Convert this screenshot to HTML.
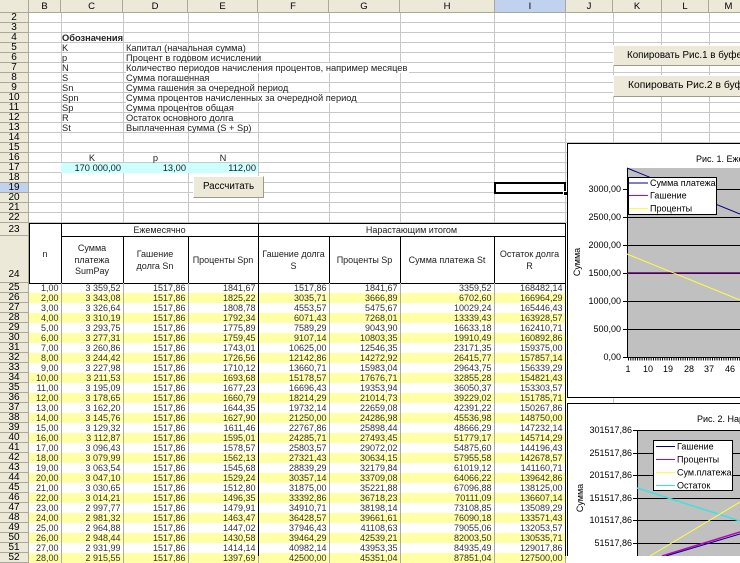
<!DOCTYPE html>
<html><head><meta charset="utf-8">
<style>
*{margin:0;padding:0;box-sizing:border-box}
body{width:740px;height:556px;overflow:hidden;background:#fff;position:relative;font-family:"Liberation Sans","DejaVu Sans",sans-serif;font-size:9.3px;color:#222}
.a{position:absolute;white-space:nowrap}
.ch{position:absolute;top:0;height:13px;background:#ece9d8;border-right:1px solid #aca899;border-bottom:1px solid #aca899;text-align:center;font-size:9.5px;line-height:13px;color:#000}
.rh{position:absolute;left:0;width:29px;background:#ece9d8;border-bottom:1px solid #aca899;border-right:1px solid #aca899;text-align:center;font-size:10px;color:#000}
.vl{position:absolute;width:1px;background:#c8c8c8}
table{position:absolute;left:29px;top:283px;border-collapse:collapse;table-layout:fixed}
td{height:10px;padding:0 2px 0 0;text-align:right;font-size:9px;line-height:10px;color:#333;border-right:1px solid #aaa;overflow:hidden;white-space:nowrap}
tr:nth-child(even) td{background:#ffffa6}
.btn{position:absolute;background:#ece9d8;border:1px solid;border-color:#fff #9d9a8b #9d9a8b #fff;font-size:9.8px;line-height:19px;white-space:nowrap;overflow:hidden;color:#000}
.hd{position:absolute;text-align:center;white-space:normal;line-height:11.5px;font-size:9px}
</style></head><body>

<div class="ch" style="left:0;width:29px"></div>
<div class="ch" style="left:29px;width:32px">B</div>
<div class="ch" style="left:61px;width:62px">C</div>
<div class="ch" style="left:123px;width:65px">D</div>
<div class="ch" style="left:188px;width:70px">E</div>
<div class="ch" style="left:258px;width:71px">F</div>
<div class="ch" style="left:329px;width:71px">G</div>
<div class="ch" style="left:400px;width:95px">H</div>
<div class="ch" style="left:495px;width:71px;background:#c1d2ee">I</div>
<div class="ch" style="left:566px;width:47px">J</div>
<div class="ch" style="left:613px;width:49px">K</div>
<div class="ch" style="left:662px;width:47px">L</div>
<div class="ch" style="left:709px;width:40px">M</div>

<div style="position:absolute;left:29px;top:13px;width:711px;height:210px;background:repeating-linear-gradient(to bottom,transparent 0,transparent 9px,#c8c8c8 9px,#c8c8c8 10px)"></div>
<div class="vl" style="left:61px;top:13px;height:210px"></div>
<div class="vl" style="left:123px;top:13px;height:210px"></div>
<div class="vl" style="left:188px;top:13px;height:210px"></div>
<div class="vl" style="left:258px;top:13px;height:210px"></div>
<div class="vl" style="left:329px;top:13px;height:210px"></div>
<div class="vl" style="left:400px;top:13px;height:210px"></div>
<div class="vl" style="left:494px;top:13px;height:210px"></div>
<div class="vl" style="left:565px;top:13px;height:210px"></div>
<div class="vl" style="left:613px;top:13px;height:210px"></div>
<div class="vl" style="left:661px;top:13px;height:210px"></div>
<div class="vl" style="left:709px;top:13px;height:210px"></div>
<div class="vl" style="left:565px;top:223px;height:333px"></div>
<div class="vl" style="left:613px;top:223px;height:333px"></div>

<div class="a" style="left:62px;top:33px;font-weight:bold">Обозначения</div>
<div class="a" style="left:62px;top:43px">K</div><div class="a" style="left:126px;top:43px">Капитал (начальная сумма)</div>
<div class="a" style="left:62px;top:53px">p</div><div class="a" style="left:126px;top:53px">Процент в годовом исчислении</div>
<div class="a" style="left:62px;top:63px">N</div><div class="a" style="left:126px;top:63px;background:#fff;padding-right:2px">Количество периодов начисления процентов, например месяцев</div>
<div class="a" style="left:62px;top:73px">S</div><div class="a" style="left:126px;top:73px">Сумма погашенная</div>
<div class="a" style="left:62px;top:83px">Sn</div><div class="a" style="left:126px;top:83px">Сумма гашения за очередной период</div>
<div class="a" style="left:62px;top:93px">Spn</div><div class="a" style="left:126px;top:93px;background:#fff">Сумма  процентов начисленных за очередной период</div>
<div class="a" style="left:62px;top:103px">Sp</div><div class="a" style="left:126px;top:103px">Сумма процентов общая</div>
<div class="a" style="left:62px;top:113px">R</div><div class="a" style="left:126px;top:113px">Остаток основного долга</div>
<div class="a" style="left:62px;top:123px">St</div><div class="a" style="left:126px;top:123px">Выплаченная сумма (S + Sp)</div>

<div class="a" style="left:61px;top:153px;width:62px;text-align:center">K</div>
<div class="a" style="left:123px;top:153px;width:65px;text-align:center">p</div>
<div class="a" style="left:188px;top:153px;width:70px;text-align:center">N</div>
<div class="a" style="left:61px;top:163px;width:197px;height:10px;background:#ccffff"></div>
<div class="a" style="left:61px;top:163px;width:60px;text-align:right;line-height:10px">170 000,00</div>
<div class="a" style="left:123px;top:163px;width:63px;text-align:right;line-height:10px">13,00</div>
<div class="a" style="left:188px;top:163px;width:68px;text-align:right;line-height:10px">112,00</div>

<div class="btn" style="left:193px;top:176px;width:71px;height:22px;text-align:center;line-height:20px">Рассчитать</div>
<div class="btn" style="left:613px;top:45px;width:140px;height:21px;padding-left:13px">Копировать Рис.1 в буфер</div>
<div class="btn" style="left:613px;top:75px;width:140px;height:22px;padding-left:14px;font-size:10.3px">Копировать Рис.2 в буфер</div>

<div class="a" style="left:494px;top:182px;width:72px;height:12px;border:2px solid #000"></div>
<div class="a" style="left:563px;top:191px;width:5px;height:5px;background:#000;border:1px solid #fff"></div>

<div class="a" style="left:29px;top:223px;width:537px;height:61px;background:#fff;border:1px solid #000"></div>
<div class="a" style="left:61px;top:236px;width:505px;height:1px;background:#000"></div>
<div class="a" style="left:61px;top:223px;width:1px;height:60px;background:#000"></div>
<div class="a" style="left:123px;top:236px;width:1px;height:47px;background:#000"></div>
<div class="a" style="left:188px;top:236px;width:1px;height:47px;background:#000"></div>
<div class="a" style="left:258px;top:223px;width:1px;height:333px;background:#000"></div>
<div class="a" style="left:329px;top:236px;width:1px;height:47px;background:#000"></div>
<div class="a" style="left:400px;top:236px;width:1px;height:47px;background:#000"></div>
<div class="a" style="left:494px;top:236px;width:1px;height:47px;background:#000"></div>
<div class="a" style="left:565px;top:223px;width:1px;height:333px;background:#000"></div>
<div class="a" style="left:61px;top:225px;width:197px;text-align:center;font-size:9px">Ежемесячно</div>
<div class="a" style="left:258px;top:225px;width:307px;text-align:center;font-size:9px">Нарастающим итогом</div>
<div class="hd" style="left:29px;top:249px;width:32px">n</div>
<div class="hd" style="left:72px;top:243px;width:40px">Сумма платежа SumPay</div>
<div class="hd" style="left:130px;top:249px;width:50px">Гашение долга Sn</div>
<div class="hd" style="left:188px;top:255px;width:70px">Проценты Spn</div>
<div class="hd" style="left:260px;top:249px;width:67px">Гашение долга S</div>
<div class="hd" style="left:329px;top:255px;width:71px">Проценты Sp</div>
<div class="hd" style="left:400px;top:255px;width:94px">Сумма платежа St</div>
<div class="hd" style="left:496px;top:249px;width:67px">Остаток долга R</div>

<table>
<colgroup><col style="width:32px"><col style="width:62px"><col style="width:65px"><col style="width:70px"><col style="width:71px"><col style="width:71px"><col style="width:94px"><col style="width:71px"></colgroup>
<tr><td>1,00</td><td>3 359,52</td><td>1517,86</td><td>1841,67</td><td>1517,86</td><td>1841,67</td><td>3359,52</td><td>168482,14</td></tr>
<tr><td>2,00</td><td>3 343,08</td><td>1517,86</td><td>1825,22</td><td>3035,71</td><td>3666,89</td><td>6702,60</td><td>166964,29</td></tr>
<tr><td>3,00</td><td>3 326,64</td><td>1517,86</td><td>1808,78</td><td>4553,57</td><td>5475,67</td><td>10029,24</td><td>165446,43</td></tr>
<tr><td>4,00</td><td>3 310,19</td><td>1517,86</td><td>1792,34</td><td>6071,43</td><td>7268,01</td><td>13339,43</td><td>163928,57</td></tr>
<tr><td>5,00</td><td>3 293,75</td><td>1517,86</td><td>1775,89</td><td>7589,29</td><td>9043,90</td><td>16633,18</td><td>162410,71</td></tr>
<tr><td>6,00</td><td>3 277,31</td><td>1517,86</td><td>1759,45</td><td>9107,14</td><td>10803,35</td><td>19910,49</td><td>160892,86</td></tr>
<tr><td>7,00</td><td>3 260,86</td><td>1517,86</td><td>1743,01</td><td>10625,00</td><td>12546,35</td><td>23171,35</td><td>159375,00</td></tr>
<tr><td>8,00</td><td>3 244,42</td><td>1517,86</td><td>1726,56</td><td>12142,86</td><td>14272,92</td><td>26415,77</td><td>157857,14</td></tr>
<tr><td>9,00</td><td>3 227,98</td><td>1517,86</td><td>1710,12</td><td>13660,71</td><td>15983,04</td><td>29643,75</td><td>156339,29</td></tr>
<tr><td>10,00</td><td>3 211,53</td><td>1517,86</td><td>1693,68</td><td>15178,57</td><td>17676,71</td><td>32855,28</td><td>154821,43</td></tr>
<tr><td>11,00</td><td>3 195,09</td><td>1517,86</td><td>1677,23</td><td>16696,43</td><td>19353,94</td><td>36050,37</td><td>153303,57</td></tr>
<tr><td>12,00</td><td>3 178,65</td><td>1517,86</td><td>1660,79</td><td>18214,29</td><td>21014,73</td><td>39229,02</td><td>151785,71</td></tr>
<tr><td>13,00</td><td>3 162,20</td><td>1517,86</td><td>1644,35</td><td>19732,14</td><td>22659,08</td><td>42391,22</td><td>150267,86</td></tr>
<tr><td>14,00</td><td>3 145,76</td><td>1517,86</td><td>1627,90</td><td>21250,00</td><td>24286,98</td><td>45536,98</td><td>148750,00</td></tr>
<tr><td>15,00</td><td>3 129,32</td><td>1517,86</td><td>1611,46</td><td>22767,86</td><td>25898,44</td><td>48666,29</td><td>147232,14</td></tr>
<tr><td>16,00</td><td>3 112,87</td><td>1517,86</td><td>1595,01</td><td>24285,71</td><td>27493,45</td><td>51779,17</td><td>145714,29</td></tr>
<tr><td>17,00</td><td>3 096,43</td><td>1517,86</td><td>1578,57</td><td>25803,57</td><td>29072,02</td><td>54875,60</td><td>144196,43</td></tr>
<tr><td>18,00</td><td>3 079,99</td><td>1517,86</td><td>1562,13</td><td>27321,43</td><td>30634,15</td><td>57955,58</td><td>142678,57</td></tr>
<tr><td>19,00</td><td>3 063,54</td><td>1517,86</td><td>1545,68</td><td>28839,29</td><td>32179,84</td><td>61019,12</td><td>141160,71</td></tr>
<tr><td>20,00</td><td>3 047,10</td><td>1517,86</td><td>1529,24</td><td>30357,14</td><td>33709,08</td><td>64066,22</td><td>139642,86</td></tr>
<tr><td>21,00</td><td>3 030,65</td><td>1517,86</td><td>1512,80</td><td>31875,00</td><td>35221,88</td><td>67096,88</td><td>138125,00</td></tr>
<tr><td>22,00</td><td>3 014,21</td><td>1517,86</td><td>1496,35</td><td>33392,86</td><td>36718,23</td><td>70111,09</td><td>136607,14</td></tr>
<tr><td>23,00</td><td>2 997,77</td><td>1517,86</td><td>1479,91</td><td>34910,71</td><td>38198,14</td><td>73108,85</td><td>135089,29</td></tr>
<tr><td>24,00</td><td>2 981,32</td><td>1517,86</td><td>1463,47</td><td>36428,57</td><td>39661,61</td><td>76090,18</td><td>133571,43</td></tr>
<tr><td>25,00</td><td>2 964,88</td><td>1517,86</td><td>1447,02</td><td>37946,43</td><td>41108,63</td><td>79055,06</td><td>132053,57</td></tr>
<tr><td>26,00</td><td>2 948,44</td><td>1517,86</td><td>1430,58</td><td>39464,29</td><td>42539,21</td><td>82003,50</td><td>130535,71</td></tr>
<tr><td>27,00</td><td>2 931,99</td><td>1517,86</td><td>1414,14</td><td>40982,14</td><td>43953,35</td><td>84935,49</td><td>129017,86</td></tr>
<tr><td>28,00</td><td>2 915,55</td><td>1517,86</td><td>1397,69</td><td>42500,00</td><td>45351,04</td><td>87851,04</td><td>127500,00</td></tr>
</table>
<div class="a" style="left:258px;top:283px;width:1px;height:273px;background:#000"></div>
<div class="a" style="left:565px;top:283px;width:1px;height:273px;background:#000"></div>

<div class="rh" style="top:13px;height:10px;line-height:10px">2</div>
<div class="rh" style="top:23px;height:10px;line-height:10px">3</div>
<div class="rh" style="top:33px;height:10px;line-height:10px">4</div>
<div class="rh" style="top:43px;height:10px;line-height:10px">5</div>
<div class="rh" style="top:53px;height:10px;line-height:10px">6</div>
<div class="rh" style="top:63px;height:10px;line-height:10px">7</div>
<div class="rh" style="top:73px;height:10px;line-height:10px">8</div>
<div class="rh" style="top:83px;height:10px;line-height:10px">9</div>
<div class="rh" style="top:93px;height:10px;line-height:10px">10</div>
<div class="rh" style="top:103px;height:10px;line-height:10px">11</div>
<div class="rh" style="top:113px;height:10px;line-height:10px">12</div>
<div class="rh" style="top:123px;height:10px;line-height:10px">13</div>
<div class="rh" style="top:133px;height:10px;line-height:10px">14</div>
<div class="rh" style="top:143px;height:10px;line-height:10px">15</div>
<div class="rh" style="top:153px;height:10px;line-height:10px">16</div>
<div class="rh" style="top:163px;height:10px;line-height:10px">17</div>
<div class="rh" style="top:173px;height:10px;line-height:10px">18</div>
<div class="rh" style="top:183px;height:10px;line-height:10px;background:#c1d2ee">19</div>
<div class="rh" style="top:193px;height:10px;line-height:10px">20</div>
<div class="rh" style="top:203px;height:10px;line-height:10px">21</div>
<div class="rh" style="top:213px;height:10px;line-height:10px">22</div>
<div class="rh" style="top:223px;height:13px;line-height:13px">23</div>
<div class="rh" style="top:236px;height:47px;line-height:78px">24</div>
<div class="rh" style="top:283px;height:10px;line-height:10px">25</div>
<div class="rh" style="top:293px;height:10px;line-height:10px">26</div>
<div class="rh" style="top:303px;height:10px;line-height:10px">27</div>
<div class="rh" style="top:313px;height:10px;line-height:10px">28</div>
<div class="rh" style="top:323px;height:10px;line-height:10px">29</div>
<div class="rh" style="top:333px;height:10px;line-height:10px">30</div>
<div class="rh" style="top:343px;height:10px;line-height:10px">31</div>
<div class="rh" style="top:353px;height:10px;line-height:10px">32</div>
<div class="rh" style="top:363px;height:10px;line-height:10px">33</div>
<div class="rh" style="top:373px;height:10px;line-height:10px">34</div>
<div class="rh" style="top:383px;height:10px;line-height:10px">35</div>
<div class="rh" style="top:393px;height:10px;line-height:10px">36</div>
<div class="rh" style="top:403px;height:10px;line-height:10px">37</div>
<div class="rh" style="top:413px;height:10px;line-height:10px">38</div>
<div class="rh" style="top:423px;height:10px;line-height:10px">39</div>
<div class="rh" style="top:433px;height:10px;line-height:10px">40</div>
<div class="rh" style="top:443px;height:10px;line-height:10px">41</div>
<div class="rh" style="top:453px;height:10px;line-height:10px">42</div>
<div class="rh" style="top:463px;height:10px;line-height:10px">43</div>
<div class="rh" style="top:473px;height:10px;line-height:10px">44</div>
<div class="rh" style="top:483px;height:10px;line-height:10px">45</div>
<div class="rh" style="top:493px;height:10px;line-height:10px">46</div>
<div class="rh" style="top:503px;height:10px;line-height:10px">47</div>
<div class="rh" style="top:513px;height:10px;line-height:10px">48</div>
<div class="rh" style="top:523px;height:10px;line-height:10px">49</div>
<div class="rh" style="top:533px;height:10px;line-height:10px">50</div>
<div class="rh" style="top:543px;height:10px;line-height:10px">51</div>
<div class="rh" style="top:553px;height:10px;line-height:10px">52</div>

<svg style="position:absolute;left:0;top:0" width="740" height="556" font-family="Liberation Sans, DejaVu Sans, sans-serif" font-size="9" fill="#000">
 <rect x="567.5" y="143.5" width="190" height="254" fill="#fff" stroke="#000"/>
 <text x="696" y="162">Рис. 1. Ежемесячно</text>
 <rect x="627" y="168" width="120" height="189" fill="#c0c0c0"/>
 <g stroke="#000" stroke-width="1">
  <line x1="623" y1="189.5" x2="740" y2="189.5"/><line x1="623" y1="217.5" x2="740" y2="217.5"/>
  <line x1="623" y1="245.5" x2="740" y2="245.5"/><line x1="623" y1="273.5" x2="740" y2="273.5"/>
  <line x1="623" y1="301.5" x2="740" y2="301.5"/><line x1="623" y1="329.5" x2="740" y2="329.5"/>
  <line x1="623" y1="357.5" x2="740" y2="357.5"/><line x1="627.5" y1="168" x2="627.5" y2="358"/>
 </g>
 <line x1="628" y1="359" x2="740" y2="359" stroke="#000" stroke-width="3" stroke-dasharray="1 1.27"/>
 <g text-anchor="end">
  <text x="621" y="192">3000,00</text><text x="621" y="220">2500,00</text><text x="621" y="248">2000,00</text>
  <text x="621" y="276">1500,00</text><text x="621" y="304">1000,00</text><text x="621" y="332">500,00</text><text x="621" y="360">0,00</text>
 </g>
 <g text-anchor="middle"><text x="628" y="372">1</text><text x="648" y="372">10</text><text x="668" y="372">19</text><text x="689" y="372">28</text><text x="709" y="372">37</text><text x="730" y="372">46</text></g>
 <text transform="translate(580,262) rotate(-90)" text-anchor="middle">Сумма</text>
 <line x1="627" y1="168" x2="740" y2="214" stroke="#000080"/>
 <line x1="627" y1="273" x2="740" y2="273" stroke="#600070" stroke-width="1.5"/>
 <line x1="627" y1="254" x2="740" y2="300" stroke="#ffff40"/>
 <rect x="628.5" y="177.5" width="88" height="37" fill="#fff" stroke="#000"/>
 <line x1="629" y1="183" x2="648" y2="183" stroke="#000080"/><text x="650" y="186">Сумма платежа</text>
 <line x1="629" y1="195.5" x2="648" y2="195.5" stroke="#c000c0"/><text x="650" y="198.5">Гашение</text>
 <line x1="629" y1="208.5" x2="648" y2="208.5" stroke="#ffff40"/><text x="650" y="211.5">Проценты</text>

 <rect x="567.5" y="403.5" width="190" height="170" fill="#fff" stroke="#000"/>
 <text x="697" y="422">Рис. 2. Нарастающим итогом</text>
 <rect x="637" y="430" width="110" height="130" fill="#c0c0c0"/>
 <g stroke="#000">
  <line x1="633" y1="430.5" x2="740" y2="430.5"/><line x1="633" y1="453.5" x2="740" y2="453.5"/>
  <line x1="633" y1="475.5" x2="740" y2="475.5"/><line x1="633" y1="498.5" x2="740" y2="498.5"/>
  <line x1="633" y1="520.5" x2="740" y2="520.5"/><line x1="633" y1="543.5" x2="740" y2="543.5"/>
  <line x1="637.5" y1="430" x2="637.5" y2="556"/>
 </g>
 <g text-anchor="end">
  <text x="632" y="433">301517,86</text><text x="632" y="456">251517,86</text><text x="632" y="478">201517,86</text>
  <text x="632" y="501">151517,86</text><text x="632" y="523">101517,86</text><text x="632" y="546">51517,86</text>
 </g>
 <text transform="translate(583,498) rotate(-90)" text-anchor="middle">Сумма</text>
 <line x1="637" y1="488" x2="740" y2="521" stroke="#40e0e0" stroke-width="1.5"/>
 <line x1="650" y1="556" x2="740" y2="502" stroke="#ffff40"/>
 <line x1="662" y1="556" x2="740" y2="532" stroke="#c000c0" stroke-width="1.5"/>
 <line x1="666" y1="556" x2="740" y2="534" stroke="#000080"/>
 <rect x="653.5" y="440.5" width="79" height="50" fill="#fff" stroke="#000"/>
 <line x1="656" y1="446.5" x2="675" y2="446.5" stroke="#000080"/><text x="677" y="449.5">Гашение</text>
 <line x1="656" y1="459.5" x2="675" y2="459.5" stroke="#c000c0"/><text x="677" y="462.5">Проценты</text>
 <line x1="656" y1="472.5" x2="675" y2="472.5" stroke="#ffff40"/><text x="677" y="475.5">Сум.платежа</text>
 <line x1="656" y1="485.5" x2="675" y2="485.5" stroke="#40e0e0"/><text x="677" y="488.5">Остаток</text>
</svg>
</body></html>
